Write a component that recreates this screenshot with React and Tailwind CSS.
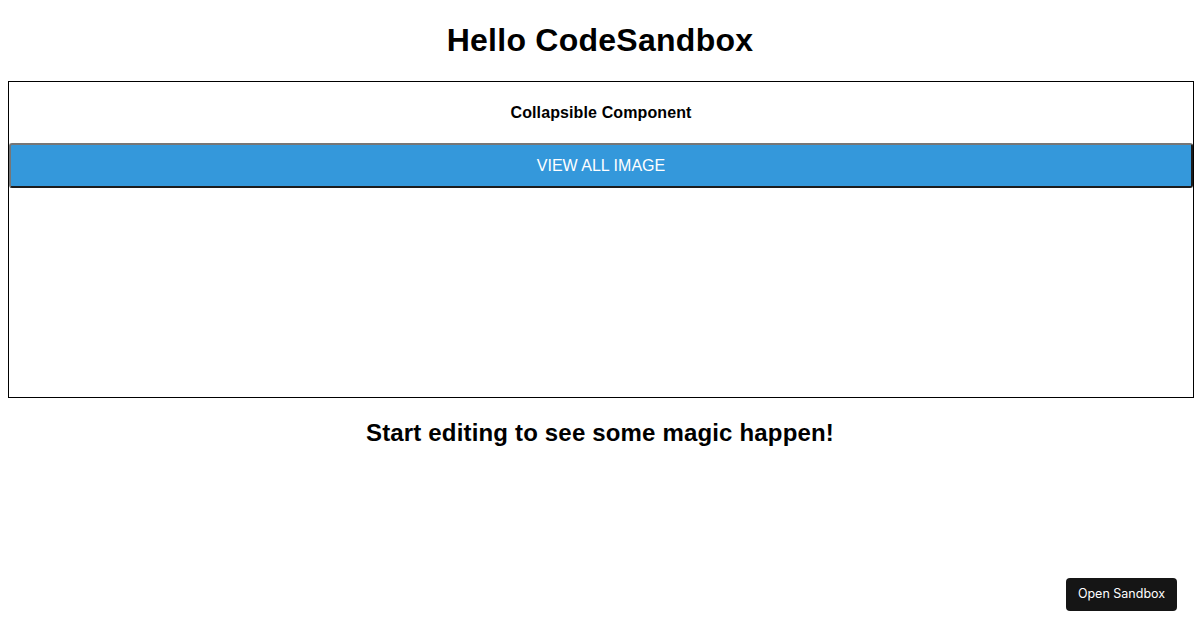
import React, { useState } from 'react';

const Collapsible = () => {
  const [open, setOpen] = useState(false);

  return (
    <div className="ml-2 w-[1186px] border border-black">
      <h4 className="mt-[21px] mb-[21px] text-center text-[16px] leading-[19px] font-bold tracking-[0.007em] text-black">
        Collapsible Component
      </h4>
      <button
        type="button"
        onClick={() => setOpen(!open)}
        className="block w-full h-[45px] rounded-[3px] border-2 border-t-[#767676] border-l-[#767676] border-r-[#1c1c1c] border-b-[#1c1c1c] bg-[#3498db] text-[16px] text-white cursor-pointer"
      >
        VIEW ALL IMAGE
      </button>
      {/* image area, empty until opened */}
      <div className="h-[209px]">
        {open && <div className="p-4 text-sm text-gray-500">No images</div>}
      </div>
    </div>
  );
};

const App = () => {
  return (
    <div className="min-h-screen bg-white text-black font-['Liberation_Sans',Arial,sans-serif]">
      <h1 className="pt-[22px] mb-[22px] text-center text-[32px] leading-[37px] font-bold tracking-[0.008em]">
        Hello CodeSandbox
      </h1>
      <Collapsible />
      <h2 className="mt-[21px] text-center text-[24px] leading-[28px] font-bold tracking-[0.007em]">
        Start editing to see some magic happen!
      </h2>

      <a
        href="#"
        className="fixed right-[23px] bottom-[19px] flex items-center justify-center w-[111px] h-[33px] rounded-[4px] bg-[#151515] text-[12.5px] text-white font-['Inter',sans-serif]"
      >
        Open Sandbox
      </a>
    </div>
  );
};

export default App;
